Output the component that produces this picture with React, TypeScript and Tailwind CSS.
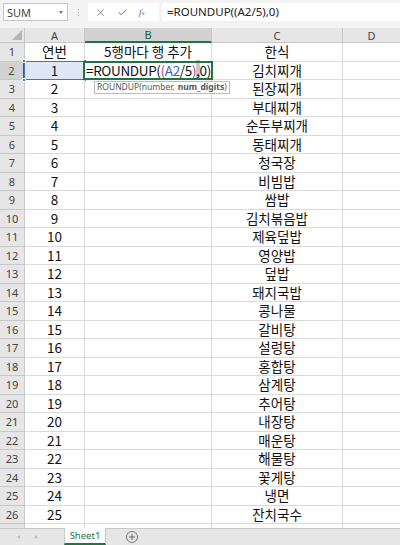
import React from 'react';
import { X, Check } from 'lucide-react';

const foods = [
  '김치찌개', '된장찌개', '부대찌개', '순두부찌개', '동태찌개', '청국장', '비빔밥', '쌈밥',
  '김치볶음밥', '제육덮밥', '영양밥', '덮밥', '돼지국밥', '콩나물', '갈비탕', '설렁탕',
  '홍합탕', '삼계탕', '추어탕', '내장탕', '매운탕', '해물탕', '꽃게탕', '냉면', '잔치국수',
];

const KR = { fontFamily: '"Noto Sans CJK KR", "Noto Sans", sans-serif' };
const UI = { fontFamily: '"Noto Sans", "Open Sans", sans-serif' };

function Corner({ pos }: { pos: string }) {
  return <div className={`absolute w-[4px] h-[4px] bg-[#4472c4] border border-white ${pos}`} />;
}

export default function App() {
  const rows: { a: string; b: React.ReactNode; c: string }[] = [
    { a: '연번', b: '5행마다 행 추가', c: '한식' },
    ...foods.map((f, i) => ({ a: String(i + 1), b: '', c: f })),
  ];

  return (
    <div className="w-[400px] h-[545px] overflow-hidden flex flex-col bg-white" style={KR}>
      {/* toolbar */}
      <div className="h-[28px] shrink-0 bg-[#f3f3f3] flex items-start pt-[3px] pl-[3px]">
        <div className="w-[65px] h-[18px] bg-white border border-[#c6c6c6] flex items-center justify-between pl-[3px] pr-[4px]">
          <span className="text-[11px] text-[#444] leading-none" style={UI}>SUM</span>
          <span className="w-0 h-0 border-l-[2.5px] border-r-[2.5px] border-t-[3px] border-l-transparent border-r-transparent border-t-[#777]" />
        </div>
        <div className="w-[20px] h-[18px] flex flex-col items-center justify-center gap-[2px]">
          <span className="w-[1px] h-[1px] bg-[#aaa]" />
          <span className="w-[1px] h-[1px] bg-[#aaa]" />
          <span className="w-[1px] h-[1px] bg-[#aaa]" />
        </div>
        <div className="w-[71px] h-[18px] bg-white flex items-center pl-[7px] gap-[11px] text-[#666]">
          <X size={11} strokeWidth={1.6} />
          <Check size={11} strokeWidth={2} />
          <span className="text-[9px] italic leading-none" style={{ fontFamily: '"Liberation Serif", serif' }}>
            f<span className="text-[7px]">x</span>
          </span>
        </div>
        <div className="ml-[3px] flex-1 h-[18px] bg-white flex items-center pl-[5px]">
          <span className="text-[11.5px] text-[#222] leading-none" style={UI}>=ROUNDUP((A2/5),0)</span>
        </div>
      </div>

      {/* column header */}
      <div className="h-[15px] shrink-0 flex text-[11px] text-[#444] leading-none" style={UI}>
        <div className="w-[25px] shrink-0 bg-[#e6e6e6] border-r border-b border-[#c8c8c8] relative">
          <svg className="absolute right-[2px] bottom-[2px]" width="10" height="10" viewBox="0 0 10 10">
            <polygon points="10,0 10,10 0,10" fill="#b4b4b4" />
          </svg>
        </div>
        <div className="w-[60px] shrink-0 bg-[#e6e6e6] border-r border-b border-[#c8c8c8] flex items-center justify-center">A</div>
        <div className="w-[127px] shrink-0 bg-[#d2d2d2] border-r border-[#c8c8c8] border-b-2 border-b-[#217346] flex items-center justify-center text-[#1f5c3a]">B</div>
        <div className="w-[131px] shrink-0 bg-[#e6e6e6] border-r border-b border-[#c8c8c8] flex items-center justify-center">C</div>
        <div className="flex-1 bg-[#e6e6e6] border-b border-[#c8c8c8] flex items-center justify-center pr-[2px]">
          <span className="w-[57px] text-center">D</span>
        </div>
      </div>

      {/* rows */}
      {rows.map((r, i) => {
        const n = i + 1;
        const sel = n === 2;
        return (
          <div key={n} className="h-[18.5px] shrink-0 flex text-[13.5px] text-[#111]">
            <div
              className={`w-[25px] shrink-0 border-b flex items-center justify-center text-[11px] leading-none ${
                sel
                  ? 'bg-[#d2d2d2] text-[#1f5c3a] border-b-[#c8c8c8] border-r-2 border-r-[#217346]'
                  : 'bg-[#e6e6e6] text-[#444] border-[#c8c8c8] border-r'
              }`}
              style={UI}
            >
              {n}
            </div>
            <div className={`w-[60px] shrink-0 border-r border-b border-[#dadada] flex items-center justify-center relative leading-none ${sel ? 'bg-[#dde7f5]' : ''}`}>
              {r.a}
              {sel && (
                <>
                  <div className="absolute inset-[-1px] border-[1.5px] border-[#4472c4]" />
                  <Corner pos="left-[-3px] top-[-3px]" />
                  <Corner pos="right-[-3px] top-[-3px]" />
                  <Corner pos="left-[-3px] bottom-[-3px]" />
                  <Corner pos="right-[-3px] bottom-[-3px]" />
                </>
              )}
            </div>
            <div className={`w-[127px] shrink-0 border-r border-b border-[#dadada] flex items-center relative leading-none ${sel ? 'justify-start' : 'justify-center'}`}>
              {sel ? (
                <>
                  <span className="pl-[1px] whitespace-nowrap tracking-[-0.35px]">
                    =ROUNDUP(<span className="text-[#c0417a]">(</span>
                    <span className="text-[#3b62c9]">A2</span>/5<span className="text-[#c0417a]">)</span>
                    <span className="bg-[#c8c8c8]">,</span>0)
                  </span>
                  <div className="absolute left-[-2px] top-[-1px] right-[-2px] bottom-[-1px] border-2 border-[#217346] z-10" />
                  <div className="absolute left-[9px] top-[19px] z-20 bg-white border border-[#bdbdbd] px-[2px] h-[13px] flex items-center whitespace-nowrap text-[8.5px] text-[#555] leading-none" style={UI}>
                    ROUNDUP(number, <span className="font-bold ml-[3px]">num_digits</span>)
                  </div>
                </>
              ) : (
                r.b
              )}
            </div>
            <div className="w-[131px] shrink-0 border-r border-b border-[#dadada] flex items-center justify-center leading-none">
              {r.c}
            </div>
            <div className="flex-1 border-b border-[#dadada]" />
          </div>
        );
      })}

      {/* partial row 27 */}
      <div className="flex-1 flex min-h-0">
        <div className="w-[25px] shrink-0 bg-[#e6e6e6] border-r border-[#c8c8c8]" />
        <div className="w-[60px] shrink-0 border-r border-[#dadada]" />
        <div className="w-[127px] shrink-0 border-r border-[#dadada]" />
        <div className="w-[131px] shrink-0 border-r border-[#dadada]" />
        <div className="flex-1" />
      </div>

      {/* sheet tabs */}
      <div className="h-[17px] shrink-0 bg-[#e6e6e6] border-t border-[#c8c8c8] flex items-stretch relative" style={UI}>
        <div className="w-[64px] flex items-center pl-[17px] gap-[15px]">
          <span className="w-0 h-0 border-t-[2.5px] border-b-[2.5px] border-r-[3px] border-t-transparent border-b-transparent border-r-[#bbb]" />
          <span className="w-0 h-0 border-t-[2.5px] border-b-[2.5px] border-l-[3px] border-t-transparent border-b-transparent border-l-[#bbb]" />
        </div>
        <div className="w-[42px] -mt-px bg-white border-l border-r border-[#c8c8c8] border-b-2 border-b-[#217346] flex items-center justify-center text-[9.5px] text-[#217346] leading-none">
          Sheet1
        </div>
        <div className="flex items-center pl-[20px]">
          <div className="w-[12px] h-[12px] rounded-full border border-[#777] flex items-center justify-center text-[#666]">
            <svg width="8" height="8" viewBox="0 0 8 8">
              <path d="M4 1v6M1 4h6" stroke="#666" strokeWidth="1" />
            </svg>
          </div>
        </div>
      </div>
    </div>
  );
}
